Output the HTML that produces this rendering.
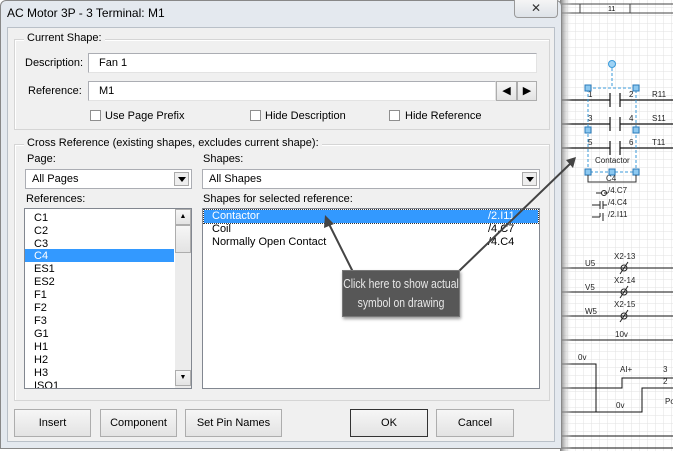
<!DOCTYPE html>
<html><head><meta charset="utf-8"><style>
*{box-sizing:border-box;margin:0;padding:0}
body{width:673px;height:451px;overflow:hidden;background:#fff;font-family:"Liberation Sans",sans-serif;font-size:11px;color:#000;position:relative}
.a{position:absolute}
.frame{left:0;top:0;width:562px;height:449px;background:#e4e9ef;border:1px solid #888;border-radius:6px 6px 0 0}
.client{left:7px;top:27px;width:548px;height:415px;background:#f0f0f0;border:1px solid #b9c0c8}
.grp{border:1px solid #d5d5d5;box-shadow:inset 1px 1px 0 #fff}
.gl{background:#f0f0f0;padding:0 3px}
.inp{background:#fff;border:1px solid #abadb3;border-right-color:#e3e3e3;border-bottom-color:#e3e3e3;padding:3px 0 0 10px}
.cb{width:11px;height:11px;border:1px solid #8f8f8f;background:#fff}
.btn{border:1px solid #adadad;background:linear-gradient(#f6f6f6,#e3e3e3);text-align:center;line-height:26px;font-size:11px}
.sel{background:#fff;border:1px solid #abadb3;padding:3px 0 0 6px}
.dd{position:absolute;right:2px;top:2px;width:15px;height:14px;border:1px solid #aaa;background:#eee}
.dd:after{content:"";position:absolute;left:3px;top:4px;border:4px solid transparent;border-top:5px solid #000}
.li{position:absolute;left:9px;height:13px;line-height:13px}
</style></head><body>
<svg class="a" style="left:560px;top:0" width="113" height="451">
<defs><pattern id="g" width="8" height="8" patternUnits="userSpaceOnUse"><path d="M8 0V8H0" fill="none" stroke="#e2e2e2" stroke-width="1"/></pattern>
<linearGradient id="sh"><stop offset="0" stop-color="#777"/><stop offset="1" stop-color="#fff" stop-opacity="0"/></linearGradient></defs>
<rect width="113" height="451" fill="url(#g)"/>
<path d="M2 4H113M2 13H113M20 4V13M70 4V13" stroke="#444" stroke-width="1" fill="none"/>
<text x="48" y="11" font-size="7">11</text>
<path d="M2 100H50M60 100H113M2 124H50M60 124H113M2 148H50M60 148H113M50 93V107M60 93V107M50 117V131M60 117V131M50 141V155M60 141V155" stroke="#111" stroke-width="1.2"/>
<g font-size="8" fill="#222"><text x="92" y="97">R11</text><text x="92" y="121">S11</text><text x="92" y="145">T11</text>
<text x="28" y="97">1</text><text x="69" y="97">2</text><text x="28" y="121">3</text><text x="69" y="121">4</text><text x="28" y="145">5</text><text x="69" y="145">6</text>
<text x="35" y="163">Contactor</text><text x="46" y="181">C4</text><text x="48" y="193">/4.C7</text><text x="48" y="205">/4.C4</text><text x="48" y="217">/2.I11</text>
<text x="25" y="266">U5</text><text x="25" y="290">V5</text><text x="25" y="314">W5</text><text x="54" y="259">X2-13</text><text x="54" y="283">X2-14</text><text x="54" y="307">X2-15</text><text x="55" y="337">10v</text>
<text x="18" y="360">0v</text><text x="60" y="372">AI+</text><text x="103" y="372">3</text><text x="103" y="384">2</text><text x="56" y="408">0v</text><text x="105" y="404">Po</text></g>
<rect x="28" y="88" width="48" height="84" fill="none" stroke="#3a9ad9" stroke-dasharray="3,2"/>
<path d="M52 68V88" stroke="#3a9ad9" stroke-dasharray="3,2"/><circle cx="52" cy="64" r="3.5" fill="#9fd3f5" stroke="#3a9ad9"/>
<g fill="#8cc8f0" stroke="#2a7ab9"><rect x="25" y="85" width="6" height="6"/><rect x="73" y="85" width="6" height="6"/><rect x="25" y="127" width="6" height="6"/><rect x="73" y="127" width="6" height="6"/><rect x="25" y="169" width="6" height="6"/><rect x="49" y="169" width="6" height="6"/><rect x="73" y="169" width="6" height="6"/></g>
<path d="M28 175V182H76V175" fill="none" stroke="#333"/>
<path d="M2 268H113M2 292H113M2 316H113M2 340H113M2 364H36V412M2 388H62V378H113M2 412H82V388H113M2 436H113M2 448H113M36 412" stroke="#111" stroke-width="1" fill="none"/>
<g fill="none" stroke="#222"><circle cx="64" cy="268" r="3"/><circle cx="64" cy="292" r="3"/><circle cx="64" cy="316" r="3"/><path d="M60 274L68 262M60 298L68 286M60 322L68 310M36 193H42M48 193H44M32 205H40M40 201V209M43 201V209M43 205H47M32 217H40M40 213V217M43 213V221"/><circle cx="44" cy="193" r="2.5"/></g>
<rect x="0" y="0" width="12" height="451" fill="url(#sh)"/>
</svg>
<div class="a frame"></div>
<div class="a" style="left:7px;top:6px;font-size:12px">AC Motor 3P - 3 Terminal: M1</div>
<div class="a" style="left:514px;top:0;width:44px;height:18px;border:1px solid #999;border-top:none;border-radius:0 0 4px 4px;background:linear-gradient(#f5f5f5,#dde2e8);text-align:center;font-size:12px;line-height:16px;color:#333">✕</div>
<div class="a client"></div>
<div class="a grp" style="left:14px;top:39px;width:536px;height:91px"></div>
<div class="a gl" style="left:24px;top:32px">Current Shape:</div>
<div class="a" style="left:25px;top:57px">Description:</div>
<div class="a inp" style="left:88px;top:53px;width:449px;height:20px">Fan 1</div>
<div class="a" style="left:28px;top:85px">Reference:</div>
<div class="a inp" style="left:88px;top:81px;width:408px;height:20px">M1</div>
<div class="a btn" style="left:496px;top:81px;width:21px;height:20px;line-height:18px">◀</div>
<div class="a btn" style="left:517px;top:81px;width:20px;height:20px;line-height:18px">▶</div>
<div class="a cb" style="left:90px;top:110px"></div><div class="a" style="left:105px;top:110px">Use Page Prefix</div>
<div class="a cb" style="left:250px;top:110px"></div><div class="a" style="left:265px;top:110px">Hide Description</div>
<div class="a cb" style="left:389px;top:110px"></div><div class="a" style="left:405px;top:110px">Hide Reference</div>
<div class="a grp" style="left:14px;top:144px;width:536px;height:257px"></div>
<div class="a gl" style="left:24px;top:137px">Cross Reference (existing shapes, excludes current shape):</div>
<div class="a" style="left:27px;top:153px">Page:</div>
<div class="a" style="left:203px;top:153px">Shapes:</div>
<div class="a sel" style="left:25px;top:169px;width:167px;height:20px">All Pages<div class="dd"></div></div>
<div class="a sel" style="left:202px;top:169px;width:338px;height:20px">All Shapes<div class="dd"></div></div>
<div class="a" style="left:26px;top:193px">References:</div>
<div class="a" style="left:203px;top:193px">Shapes for selected reference:</div>
<div class="a" style="left:24px;top:208px;width:168px;height:181px;background:#fff;border:1px solid #828790;overflow:hidden">
<div class="li" style="top:3px">C1</div><div class="li" style="top:16px">C2</div><div class="li" style="top:29px">C3</div>
<div style="position:absolute;left:0;top:40px;width:149px;height:13px;background:#3399ff"></div>
<div class="li" style="top:41px;color:#fff">C4</div><div class="li" style="top:54px">ES1</div><div class="li" style="top:67px">ES2</div><div class="li" style="top:80px">F1</div><div class="li" style="top:93px">F2</div><div class="li" style="top:106px">F3</div><div class="li" style="top:119px">G1</div><div class="li" style="top:132px">H1</div><div class="li" style="top:145px">H2</div><div class="li" style="top:158px">H3</div><div class="li" style="top:171px">ISO1</div>
<div style="position:absolute;left:150px;top:0;width:17px;height:179px;background:#ececec">
<div class="btn" style="position:absolute;left:0;top:0;width:16px;height:16px;line-height:14px;font-size:7px">▲</div>
<div class="btn" style="position:absolute;left:0;top:16px;width:16px;height:28px"></div>
<div class="btn" style="position:absolute;left:0;top:161px;width:16px;height:16px;line-height:14px;font-size:7px">▼</div></div>
</div>
<div class="a" style="left:202px;top:208px;width:338px;height:181px;background:#fff;border:1px solid #828790">
<div style="position:absolute;left:1px;top:1px;width:334px;height:13px;background:#3399ff;outline:1px dotted #333"></div>
<div class="li" style="top:1px;color:#fff">Contactor</div><div class="a" style="left:285px;top:1px;color:#fff;line-height:13px">/2.I11</div>
<div class="li" style="top:14px">Coil</div><div class="a" style="left:285px;top:14px;line-height:13px">/4.C7</div>
<div class="li" style="top:27px">Normally Open Contact</div><div class="a" style="left:285px;top:27px;line-height:13px">/4.C4</div>
</div>
<svg class="a" style="left:0;top:0" width="673" height="451">
<path d="M353 272L329 224M458 272L572 162" stroke="#444" stroke-width="2"/>
<path d="M325 215L324 228L334 224Z M576 157L566 160L573 168Z" fill="#444"/>
</svg>
<div class="a" style="left:342px;top:270px;width:118px;height:47px;background:#575757;border:1px solid #777;box-shadow:1px 2px 3px rgba(0,0,0,.4)"></div>
<div class="a" style="left:301px;top:274px;width:200px;color:#e8e8e8;text-align:center;font-size:13px;line-height:19px;white-space:nowrap;transform:scaleX(0.8)">Click here to show actual<br>symbol on drawing</div>
<div class="a btn" style="left:14px;top:409px;width:77px;height:28px">Insert</div>
<div class="a btn" style="left:100px;top:409px;width:77px;height:28px">Component</div>
<div class="a btn" style="left:185px;top:409px;width:97px;height:28px">Set Pin Names</div>
<div class="a btn" style="left:350px;top:409px;width:78px;height:28px;border:1px solid #333">OK</div>
<div class="a btn" style="left:436px;top:409px;width:78px;height:28px">Cancel</div>
</body></html>
